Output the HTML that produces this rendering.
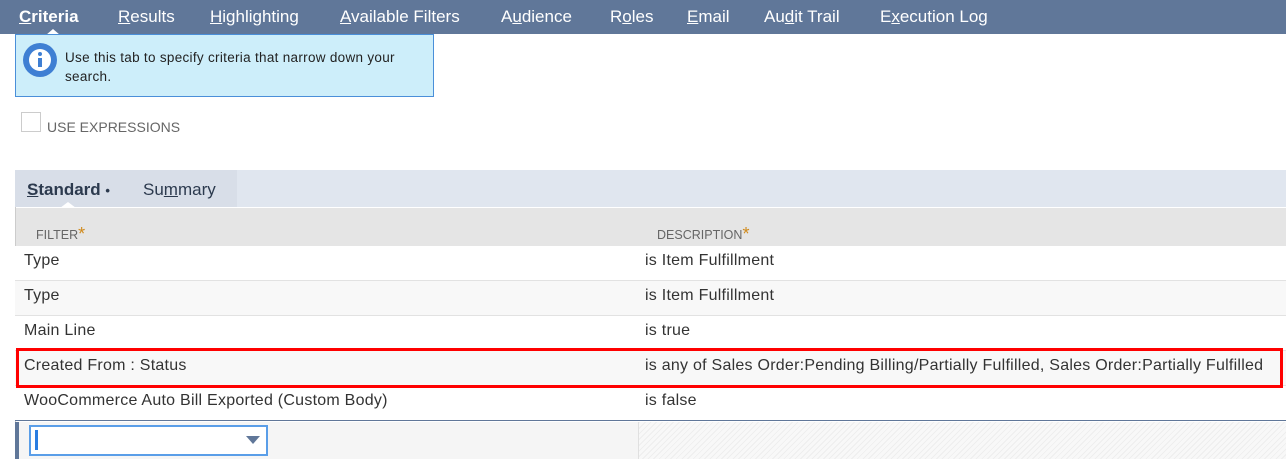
<!DOCTYPE html>
<html><head><style>
*{margin:0;padding:0;box-sizing:border-box}
body{width:1286px;height:459px;overflow:hidden;background:#fff;font-family:"Liberation Sans",sans-serif;color:#333;position:relative}
.nav{position:absolute;left:0;top:0;width:1286px;height:34px;background:#607799}
.nav span{position:absolute;top:7px;font-size:17px;color:#fff}
.nav u{text-decoration:underline}
.abs{position:absolute}
.row{position:absolute;left:15px;width:1271px;height:35px;border-bottom:1px solid #e2e2e2;font-size:16px;letter-spacing:0.25px}
.row .a{position:absolute;left:9px;top:6px}
.row .b{position:absolute;left:630px;top:6px}
</style></head><body>
<div class="nav">
<span style="left:19px;font-weight:bold"><u>C</u>riteria</span>
<span style="left:118px"><u>R</u>esults</span>
<span style="left:210px"><u>H</u>ighlighting</span>
<span style="left:340px"><u>A</u>vailable Filters</span>
<span style="left:501px">A<u>u</u>dience</span>
<span style="left:610px">R<u>o</u>les</span>
<span style="left:687px"><u>E</u>mail</span>
<span style="left:764px">Au<u>d</u>it Trail</span>
<span style="left:880px">E<u>x</u>ecution Log</span>
</div>
<div class="abs" style="left:46px;top:29px;width:0;height:0;border-left:7px solid transparent;border-right:7px solid transparent;border-bottom:6px solid #fff"></div>
<div class="abs" style="left:15px;top:34px;width:419px;height:63px;background:#cdeefa;border:1px solid #4a8fd9"></div>
<div class="abs" style="left:23px;top:43px;width:34px;height:34px;border-radius:50%;background:#3f7fd3"></div>
<div class="abs" style="left:29px;top:49px;width:22px;height:22px;border-radius:50%;background:#fff"></div>
<div class="abs" style="left:38px;top:52px;width:4px;height:4px;border-radius:50%;background:#3f7fd3"></div>
<div class="abs" style="left:38px;top:58px;width:4px;height:9px;background:#3f7fd3"></div>
<div class="abs" style="left:65px;top:48px;font-size:13.5px;letter-spacing:0.3px;line-height:19px;color:#222">Use this tab to specify criteria that narrow down your<br>search.</div>
<div class="abs" style="left:21px;top:112px;width:20px;height:20px;border:1px solid #ccc;background:#fff"></div>
<div class="abs" style="left:47px;top:119px;font-size:14px;color:#666">USE EXPRESSIONS</div>
<div class="abs" style="left:15px;top:170px;width:1271px;height:37px;background:#e0e6ef"></div>
<div class="abs" style="left:15px;top:170px;width:222px;height:37px;background:#d8dee8"></div>
<div class="abs" style="left:27px;top:180px;font-size:17px;color:#2c3a4e;font-weight:bold"><u>S</u>tandard <span style="font-size:13px">•</span></div>
<div class="abs" style="left:143px;top:180px;font-size:17px;color:#2c3a4e">Su<u>m</u>mary</div>
<div class="abs" style="left:60px;top:202px;width:0;height:0;border-left:8px solid transparent;border-right:8px solid transparent;border-bottom:6px solid #fff"></div>
<div class="abs" style="left:15px;top:207px;width:1px;height:252px;background:#ccc"></div>
<div class="abs" style="left:16px;top:208px;width:1270px;height:38px;background:#e5e5e5"></div>
<div class="abs" style="left:36px;top:223px;font-size:12.5px;color:#666">FILTER<span style="color:#d08a1c;font-size:18px;position:relative;top:1px">*</span></div>
<div class="abs" style="left:657px;top:223px;font-size:12.5px;color:#666">DESCRIPTION<span style="color:#d08a1c;font-size:18px;position:relative;top:1px">*</span></div>
<div class="row" style="top:246px;background:#fff"><span class="a">Type</span><span class="b">is Item Fulfillment</span></div>
<div class="row" style="top:281px;background:#f8f8f8"><span class="a">Type</span><span class="b">is Item Fulfillment</span></div>
<div class="row" style="top:316px;background:#fff"><span class="a">Main Line</span><span class="b">is true</span></div>
<div class="row" style="top:351px;background:#f8f8f8"><span class="a">Created From : Status</span><span class="b">is any of Sales Order:Pending Billing/Partially Fulfilled, Sales Order:Partially Fulfilled</span></div>
<div class="row" style="top:386px;background:#fff;border-bottom:1px solid #607799"><span class="a">WooCommerce Auto Bill Exported (Custom Body)</span><span class="b">is false</span></div>
<div class="abs" style="left:16px;top:348px;width:1267px;height:40px;border:3px solid #f00"></div>
<div class="abs" style="left:15px;top:422px;width:4px;height:37px;background:#607799"></div>
<div class="abs" style="left:19px;top:422px;width:619px;height:37px;background:#f5f5f5"></div>
<div class="abs" style="left:638px;top:422px;width:648px;height:37px;background:repeating-linear-gradient(135deg,#eee 0 1px,#f8f8f8 1px 4px);border-left:1px solid #e0e0e0"></div>
<div class="abs" style="left:29px;top:425px;width:239px;height:31px;border:2px solid #5a9ee8;background:#fff"></div>
<div class="abs" style="left:35px;top:430px;width:3px;height:20px;background:#2a7de1"></div>
<div class="abs" style="left:246px;top:436px;width:0;height:0;border-left:7px solid transparent;border-right:7px solid transparent;border-top:8px solid #607799"></div>
</body></html>
